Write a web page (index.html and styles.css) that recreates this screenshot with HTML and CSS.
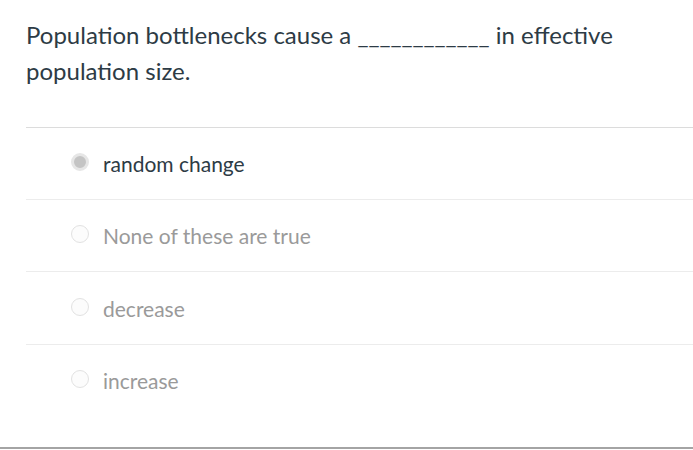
FILE: index.html
```html
<!DOCTYPE html>
<html>
<head>
<meta charset="utf-8">
<link rel="stylesheet" href="styles.css">
</head>
<body>
<div class="quiz">
  <div class="question">Population bottlenecks cause a ____________ in effective population size.</div>
  <div class="answers">
    <div class="answer selected"><span class="radio"></span><span class="label">random change</span></div>
    <div class="answer"><span class="radio"></span><span class="label">None of these are true</span></div>
    <div class="answer"><span class="radio"></span><span class="label">decrease</span></div>
    <div class="answer"><span class="radio"></span><span class="label">increase</span></div>
  </div>
</div>
</body>
</html>
```
FILE: styles.css
```css
html, body { margin: 0; padding: 0; background: #fff; }
body { font-family: Lato, "Open Sans", sans-serif; width: 693px; height: 450px; overflow: hidden; }
.quiz { border-bottom: 2px solid #a4a4a4; height: 449px; box-sizing: border-box; }
.question {
  padding: 17px 60px 0 26px;
  font-size: 24px;
  line-height: 36px;
  color: #2d3b45;
  height: 127px;
  box-sizing: border-box;
}
.answers { margin-left: 26px; }
.answer {
  display: flex; align-items: center;
  height: 72px;
  border-top: 1px solid #ececec;
  box-sizing: border-box;
  padding-left: 45px;
  color: #9a9a9a;
  font-size: 21px;
}
.answers .answer:nth-child(3) { height: 73px; }
.answers .answer:first-child { border-top-color: #dcdcdc; }
.answer.selected { color: #2d3b45; }
.radio {
  width: 18px; height: 18px; border-radius: 50%;
  border: 1px solid #e2e2e2; box-sizing: border-box;
  background: #fcfcfc;
  margin-right: 14px; margin-top: -3px;
}
.selected .radio {
  border: 3px solid #e6e6e6;
  background: #c4c4c4;
}
```
